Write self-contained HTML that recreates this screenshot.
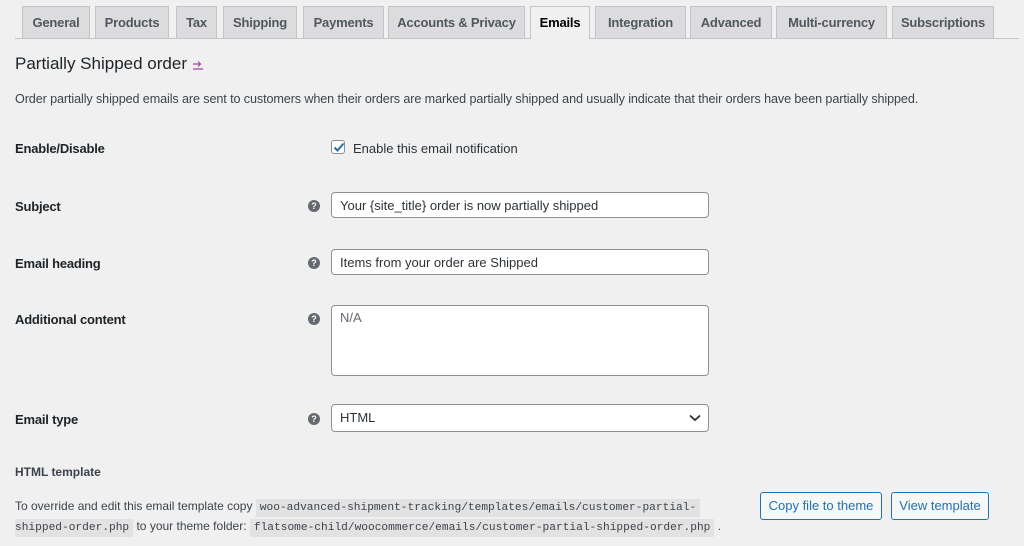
<!DOCTYPE html>
<html><head><style>
body{margin:0;width:1024px;height:546px;background:#f0f0f1;font-family:"Liberation Sans",sans-serif;color:#1d2327;font-size:13px;position:relative;overflow:hidden}
.a{position:absolute;white-space:nowrap}
.tab{position:absolute;top:6px;height:31px;background:#dcdcde;border:1px solid #c3c4c7;border-bottom:none;font-weight:bold;font-size:13px;color:#50575e;text-align:center;line-height:31px;letter-spacing:-0.2px}
.tab.on{background:#f0f0f1;color:#000;height:32px}
.lbl{font-weight:bold;font-size:13px;letter-spacing:-0.2px}
.in{position:absolute;left:331px;height:26px;background:#fff;border:1px solid #8c8f94;border-radius:4px;line-height:26px;padding-left:8px;box-sizing:border-box;width:378px;font-size:13px;color:#2c3338}
.q{position:absolute;left:308px;width:12px;height:12px;border-radius:50%;background:#646970;color:#fff;font-size:9px;font-weight:bold;text-align:center;line-height:12px}
code{font-family:"Liberation Mono",monospace;font-size:11.2px;background:#e2e2e3;padding:3px 4px;color:#3c434a}
.btn{position:absolute;top:492px;height:28px;border:1px solid #2271b1;border-radius:3px;background:#f6f7f7;color:#2271b1;font-size:13px;line-height:26px;text-align:center;box-sizing:border-box}
</style></head><body>
<div class="a" style="left:15px;top:38px;width:1004px;height:1px;background:#c3c4c7"></div>
<div class="tab" style="left:22px;width:66px">General</div>
<div class="tab" style="left:95px;width:72px">Products</div>
<div class="tab" style="left:176px;width:39px">Tax</div>
<div class="tab" style="left:223px;width:72px">Shipping</div>
<div class="tab" style="left:303px;width:79px">Payments</div>
<div class="tab" style="left:388px;width:135px">Accounts &amp; Privacy</div>
<div class="tab on" style="left:530px;width:58px">Emails</div>
<div class="tab" style="left:595px;width:89px">Integration</div>
<div class="tab" style="left:690px;width:80px">Advanced</div>
<div class="tab" style="left:776px;width:109px">Multi-currency</div>
<div class="tab" style="left:892px;width:100px">Subscriptions</div>

<div class="a" style="left:15px;top:54px;font-size:17px;color:#1d2327">Partially Shipped order</div>
<svg class="a" style="left:192px;top:58px" width="12" height="12"><path d="M1 6 H8 M6 3.5 L8.5 6 L6 8.5 M1 11 H11" stroke="#a0449e" stroke-width="1.2" fill="none"/></svg>
<div class="a" style="left:15px;top:92px;font-size:12.6px;color:#3c434a;letter-spacing:-0.1px">Order partially shipped emails are sent to customers when their orders are marked partially shipped and usually indicate that their orders have been partially shipped.</div>

<div class="a lbl" style="left:15px;top:141px">Enable/Disable</div>
<div class="a" style="left:331px;top:140px;width:14px;height:14px;border:1px solid #8c8f94;border-radius:3px;background:#fff;box-sizing:border-box"></div>
<svg class="a" style="left:332px;top:140px" width="14" height="14"><path d="M2.5 7.5 L5.5 10.5 L11.5 3.5" stroke="#2271b1" stroke-width="2" fill="none"/></svg>
<div class="a" style="left:353px;top:141px;color:#2c3338">Enable this email notification</div>

<div class="a lbl" style="left:15px;top:199px">Subject</div>
<div class="q" style="top:200px">?</div>
<div class="in" style="top:192px">Your {site_title} order is now partially shipped</div>

<div class="a lbl" style="left:15px;top:256px">Email heading</div>
<div class="q" style="top:257px">?</div>
<div class="in" style="top:249px">Items from your order are Shipped</div>

<div class="a lbl" style="left:15px;top:312px">Additional content</div>
<div class="q" style="top:313px">?</div>
<div class="in" style="top:305px;height:71px;line-height:18px;padding-top:3px;color:#646970">N/A</div>

<div class="a lbl" style="left:15px;top:412px">Email type</div>
<div class="q" style="top:413px">?</div>
<div class="in" style="top:404px;height:28px;line-height:26px">HTML</div>
<svg class="a" style="left:689px;top:414px" width="12" height="8"><path d="M1 1.5 L6 6 L11 1.5" stroke="#2c3338" stroke-width="1.8" fill="none"/></svg>

<div class="a" style="left:15px;top:465px;font-size:12px;font-weight:bold;color:#3c434a">HTML template</div>
<div class="a" style="left:15px;top:499px;font-size:12px;color:#3c434a">To override and edit this email template copy <code>woo-advanced-shipment-tracking/templates/emails/customer-partial-</code></div>
<div class="a" style="left:15px;top:519px;font-size:12px;color:#3c434a"><code style="padding-left:0">shipped-order.php</code> to your theme folder: <code>flatsome-child/woocommerce/emails/customer-partial-shipped-order.php</code> .</div>
<div class="btn" style="left:760px;width:122px">Copy file to theme</div>
<div class="btn" style="left:891px;width:98px">View template</div>
</body></html>
